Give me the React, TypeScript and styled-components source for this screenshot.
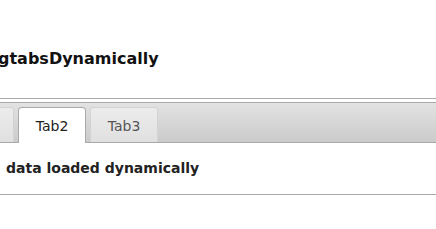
import React, { useState } from "react";
import styled, { createGlobalStyle } from "styled-components";

const GlobalStyle = createGlobalStyle`
  html, body {
    margin: 0;
    padding: 0;
    background: #fff;
    overflow: hidden;
  }
`;

const Page = styled.div`
  width: 436px;
  height: 229px;
  overflow: hidden;
  padding-top: 48px;
  box-sizing: border-box;
`;

const Title = styled.h1`
  margin: 0 0 0 -2px;
  font-family: "DejaVu Sans", Verdana, sans-serif;
  font-size: 16px;
  font-weight: bold;
  line-height: 22px;
  color: #111;
  white-space: nowrap;
`;

const Rule = styled.div`
  margin-top: 28px;
  border-top: 1px solid #aaa;
  height: 0;
`;

const TabBar = styled.div`
  margin-top: 3px;
  margin-left: -54px;
  height: 41px;
  box-sizing: border-box;
  border-top: 1px solid #aaa;
  border-bottom: 1px solid #aaa;
  background: linear-gradient(#e2e2e2, #cbcbcb);
  display: flex;
  align-items: flex-end;
  gap: 4px;
`;

const Tab = styled.button<{ $active?: boolean }>`
  width: 68px;
  height: ${(p) => (p.$active ? "36px" : "35px")};
  margin-bottom: ${(p) => (p.$active ? "-1px" : "0")};
  box-sizing: border-box;
  border: 1px solid ${(p) => (p.$active ? "#aaa" : "#d3d3d3")};
  border-bottom: none;
  border-radius: 4px 4px 0 0;
  background: ${(p) =>
    p.$active ? "#fff" : "linear-gradient(#ececec, #e0e0e0)"};
  font-family: "DejaVu Sans", Verdana, sans-serif;
  font-size: 14px;
  color: ${(p) => (p.$active ? "#222" : "#555")};
  padding: 1px 0 0;
  cursor: pointer;
`;

const Content = styled.div`
  padding: 14px 0 0 6px;
  height: 52px;
  box-sizing: border-box;
  border-bottom: 1px solid #aaa;
  font-family: "DejaVu Sans", Verdana, sans-serif;
  font-size: 14px;
  font-weight: bold;
  color: #222;
  line-height: 22px;
`;

export default function App() {
  const [active, setActive] = useState(1);
  const tabs = ["Tab1", "Tab2", "Tab3"];
  return (
    <>
      <GlobalStyle />
      <Page>
        <Title>gtabsDynamically</Title>
        <Rule />
        <TabBar>
          {tabs.map((t, i) => (
            <Tab key={t} $active={i === active} onClick={() => setActive(i)}>
              {t}
            </Tab>
          ))}
        </TabBar>
        <Content>data loaded dynamically</Content>
      </Page>
    </>
  );
}
